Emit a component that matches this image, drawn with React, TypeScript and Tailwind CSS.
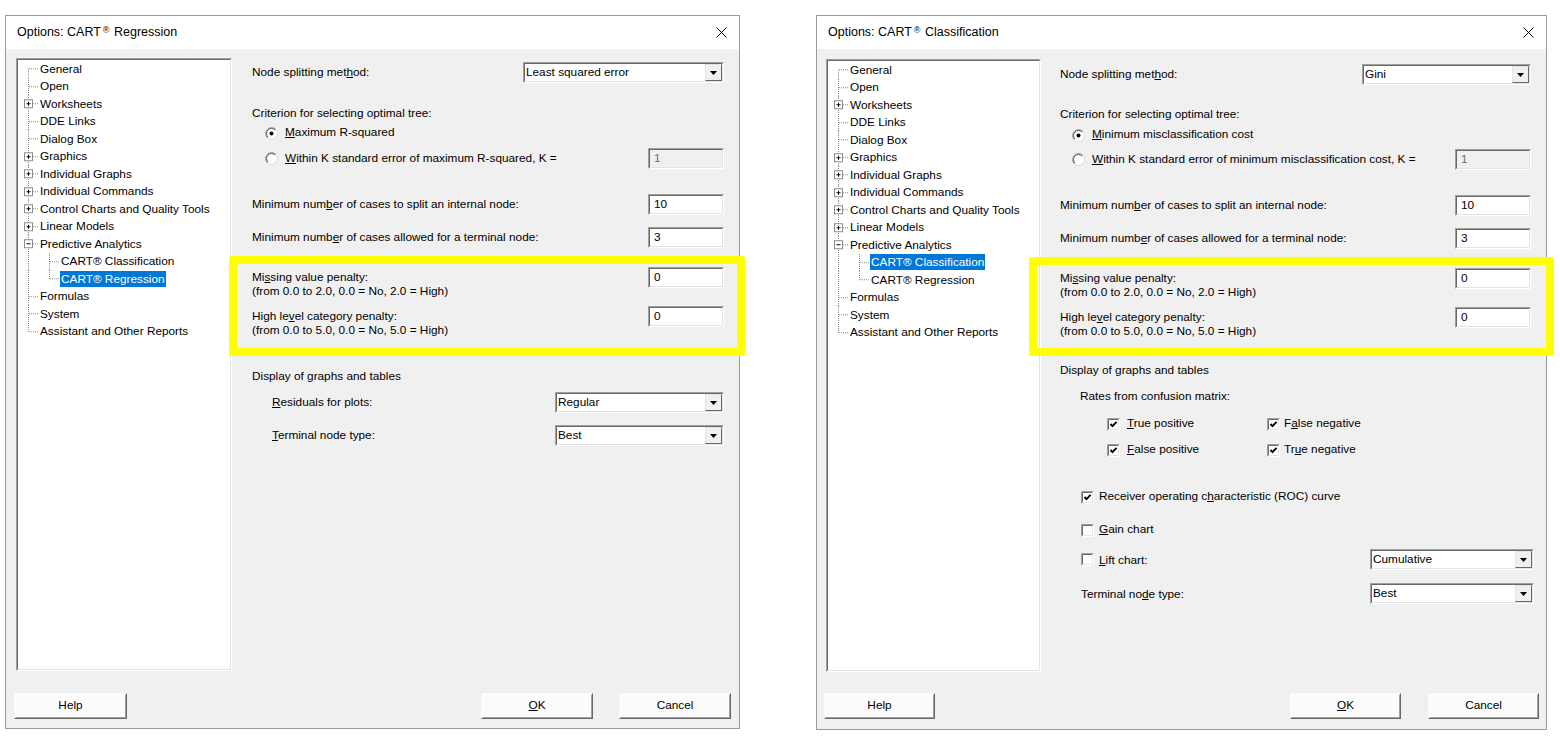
import React from 'react';

const FONT = "font-['Liberation_Sans',Arial,sans-serif]";

function Sunken({ className = '', bg = 'bg-white', children }: { className?: string; bg?: string; children?: React.ReactNode }) {
  return (
    <div className={`flex border border-t-[#a0a0a0] border-l-[#a0a0a0] border-r-white border-b-white ${className}`}>
      <div className={`flex-1 flex min-w-0 border border-t-[#696969] border-l-[#696969] border-r-[#e3e3e3] border-b-[#e3e3e3] ${bg}`}>
        {children}
      </div>
    </div>
  );
}

function TextBox({ value, disabled = false }: { value: string; disabled?: boolean }) {
  return (
    <Sunken className="w-[76px] h-[21px] shrink-0" bg={disabled ? 'bg-[#f0f0f0]' : 'bg-white'}>
      <span className={`self-center pl-[4px] ${disabled ? 'text-[#6d6d6d]' : ''}`}>{value}</span>
    </Sunken>
  );
}

function Dropdown({ w, value }: { w: string; value: string }) {
  return (
    <Sunken className={`${w} h-[21px] shrink-0`}>
      <span className="flex-1 self-center pl-[1px] whitespace-nowrap">{value}</span>
      <div className="w-[17px] flex items-center justify-center bg-[#f0f0f0] border border-t-[#e3e3e3] border-l-[#e3e3e3] border-r-[#696969] border-b-[#696969]">
        <svg width="7" height="4" viewBox="0 0 7 4">
          <path d="M0 0H7L3.5 4Z" fill="#000" />
        </svg>
      </div>
    </Sunken>
  );
}

function Radio({ checked = false }: { checked?: boolean }) {
  return (
    <svg width="13" height="13" viewBox="0 0 13 13" className="shrink-0">
      <circle cx="6.5" cy="6.5" r="6" fill="#fff" stroke="#dcdcdc" />
      <path d="M2.26 10.74 A6 6 0 0 1 10.74 2.26" fill="none" stroke="#9a9a9a" />
      <path d="M2.96 10.04 A5 5 0 0 1 10.04 2.96" fill="none" stroke="#5a5a5a" />
      {checked && <circle cx="6.5" cy="6.5" r="2" fill="#000" />}
    </svg>
  );
}

function Check({ checked = false }: { checked?: boolean }) {
  return (
    <svg width="13" height="13" viewBox="0 0 13 13" className="shrink-0">
      <rect x="0" y="0" width="13" height="13" fill="#fff" />
      <path d="M0.5 12.5V0.5H12.5" stroke="#a0a0a0" fill="none" />
      <path d="M1.5 11.5V1.5H11.5" stroke="#696969" fill="none" />
      <path d="M1.5 11.5H11.5V1.5" stroke="#e3e3e3" fill="none" />
      {checked && <polyline points="3.5,6 5.5,8.2 9.5,3.8" stroke="#000" strokeWidth="1.9" fill="none" />}
    </svg>
  );
}

function Btn({ children, className = '' }: { children: React.ReactNode; className?: string }) {
  return (
    <div className={`h-[26px] flex border border-t-[#f8f8f8] border-l-[#f8f8f8] border-r-[#696969] border-b-[#696969] ${className}`}>
      <div className="flex-1 flex items-center justify-center bg-[#fbfbfb] border border-t-white border-l-white border-r-[#a0a0a0] border-b-[#a0a0a0]">
        {children}
      </div>
    </div>
  );
}

type Kind = 'leaf' | 'plus' | 'minus' | 'child';
type Item = { label: string; kind: Kind };

function Gutter({ kind, first, last, box }: { kind: 'root' | 'child'; first: boolean; last: boolean; box?: 'plus' | 'minus' }) {
  const y1 = first ? 8.75 : 0;
  const y2 = last ? 8.75 : 17.5;
  return (
    <svg width="21" height="17.5" viewBox="0 0 21 17.5" className="shrink-0">
      <line x1="10.5" y1={y1} x2="10.5" y2={y2} stroke="#8c8c8c" strokeDasharray="1 1" />
      <line x1={box ? 15 : 11} y1="8.75" x2="21" y2="8.75" stroke="#8c8c8c" strokeDasharray="1 1" />
      {box && (
        <g>
          <rect x="6.5" y="4.75" width="8" height="8" fill="#fff" stroke="#8c8c8c" />
          <line x1="8.5" y1="8.75" x2="12.5" y2="8.75" stroke="#000" />
          {box === 'plus' && <line x1="10.5" y1="6.75" x2="10.5" y2="10.75" stroke="#000" />}
        </g>
      )}
      {kind === 'child' && null}
    </svg>
  );
}

function ContinueLine() {
  return (
    <svg width="21" height="17.5" viewBox="0 0 21 17.5" className="shrink-0">
      <line x1="10.5" y1="0" x2="10.5" y2="17.5" stroke="#8c8c8c" strokeDasharray="1 1" />
    </svg>
  );
}

const TREE: Item[] = [
  { label: 'General', kind: 'leaf' },
  { label: 'Open', kind: 'leaf' },
  { label: 'Worksheets', kind: 'plus' },
  { label: 'DDE Links', kind: 'leaf' },
  { label: 'Dialog Box', kind: 'leaf' },
  { label: 'Graphics', kind: 'plus' },
  { label: 'Individual Graphs', kind: 'plus' },
  { label: 'Individual Commands', kind: 'plus' },
  { label: 'Control Charts and Quality Tools', kind: 'plus' },
  { label: 'Linear Models', kind: 'plus' },
  { label: 'Predictive Analytics', kind: 'minus' },
  { label: 'CART® Classification', kind: 'child' },
  { label: 'CART® Regression', kind: 'child' },
  { label: 'Formulas', kind: 'leaf' },
  { label: 'System', kind: 'leaf' },
  { label: 'Assistant and Other Reports', kind: 'leaf' },
];

function Tree({ selected, w }: { selected: string; w: string }) {
  return (
    <Sunken className={`${w} h-[613px] shrink-0`}>
      <div className="flex flex-col">
        {TREE.map((it, i) => {
          const sel = it.label === selected;
          const label = (
            <span className={`px-[1px] h-[16px] leading-[16px] whitespace-nowrap ${sel ? 'bg-[#0078d7] text-white' : ''}`}>{it.label}</span>
          );
          if (it.kind === 'child') {
            const isLastChild = it.label === 'CART® Regression';
            return (
              <div key={i} className="h-[17.5px] flex items-center">
                <ContinueLine />
                <Gutter kind="child" first={false} last={isLastChild} />
                {label}
              </div>
            );
          }
          return (
            <div key={i} className="h-[17.5px] flex items-center">
              <Gutter
                kind="root"
                first={i === 0}
                last={i === TREE.length - 1}
                box={it.kind === 'plus' ? 'plus' : it.kind === 'minus' ? 'minus' : undefined}
              />
              {label}
            </div>
          );
        })}
      </div>
    </Sunken>
  );
}

function TitleBar({ title }: { title: string }) {
  return (
    <div className="h-[33px] bg-white flex items-center justify-between pl-[11px] pr-[12px] shrink-0">
      <span className={`text-[12.5px] text-black ${FONT}`}>
        Options: CART<span className="text-[9px] relative top-[-3px] ml-[2px] mr-[1px]">®</span> {title}
      </span>
      <svg width="11" height="11" viewBox="0 0 11 11">
        <path d="M0.5 0.5L10.5 10.5M10.5 0.5L0.5 10.5" stroke="#000" strokeWidth="1" />
      </svg>
    </div>
  );
}

function RegressionDialog() {
  return (
    <div className="ml-[5px] mt-[15px] w-[735px] h-[714px] border border-[#9a9a9a] flex flex-col shrink-0">
      <TitleBar title="Regression" />
      <div className="flex-1 bg-[#f0f0f0] flex flex-col">
        <div className="flex">
          <div className="ml-[10px] mt-[9px]">
            <Tree selected="CART® Regression" w="w-[216px]" />
          </div>
          <div className="flex-1 flex flex-col pl-[20px] pr-[15px] pt-[13px]">
            <div className="h-[21px] flex items-center justify-between">
              <span>Node splitting met<u>h</u>od:</span>
              <Dropdown w="w-[201px]" value="Least squared error" />
            </div>
            <div className="mt-[23px] h-[14px] leading-[14px]">Criterion for selecting optimal tree:</div>
            <div className="mt-[5px] h-[16px] flex items-center pl-[13px]">
              <Radio checked />
              <span className="ml-[7px]"><u>M</u>aximum R-squared</span>
            </div>
            <div className="mt-[7px] h-[21px] flex items-center justify-between pl-[13px]">
              <div className="flex items-center">
                <Radio />
                <span className="ml-[7px]"><u>W</u>ithin K standard error of maximum R-squared, K =</span>
              </div>
              <TextBox value="1" disabled />
            </div>
            <div className="mt-[25px] h-[21px] flex items-center justify-between">
              <span>Minimum num<u>b</u>er of cases to split an internal node:</span>
              <TextBox value="10" />
            </div>
            <div className="mt-[12px] h-[21px] flex items-center justify-between">
              <span>Minimum numb<u>e</u>r of cases allowed for a terminal node:</span>
              <TextBox value="3" />
            </div>
            <div className="mt-[19px] h-[31px] flex items-start justify-between">
              <div className="pt-[4px] leading-[13.5px]">
                Mi<u>s</u>sing value penalty:<br />(from 0.0 to 2.0, 0.0 = No, 2.0 = High)
              </div>
              <TextBox value="0" />
            </div>
            <div className="mt-[8px] h-[31px] flex items-start justify-between">
              <div className="pt-[4px] leading-[13.5px]">
                High le<u>v</u>el category penalty:<br />(from 0.0 to 5.0, 0.0 = No, 5.0 = High)
              </div>
              <TextBox value="0" />
            </div>
            <div className="mt-[32px] h-[14px] leading-[14px]">Display of graphs and tables</div>
            <div className="mt-[9px] h-[21px] flex items-center justify-between pl-[20px]">
              <span><u>R</u>esiduals for plots:</span>
              <Dropdown w="w-[169px]" value="Regular" />
            </div>
            <div className="mt-[12px] h-[21px] flex items-center justify-between pl-[20px]">
              <span><u>T</u>erminal node type:</span>
              <Dropdown w="w-[169px]" value="Best" />
            </div>
          </div>
        </div>
        <div className="mt-auto mb-[9px] flex items-center px-[8px]">
          <Btn className="w-[113px]">Help</Btn>
          <Btn className="w-[112px] ml-auto"><span><u>O</u>K</span></Btn>
          <Btn className="w-[112px] ml-[26px]">Cancel</Btn>
        </div>
      </div>
    </div>
  );
}

function ClassificationDialog() {
  return (
    <div className="ml-[76px] mt-[15px] w-[731px] h-[715px] border border-[#9a9a9a] flex flex-col shrink-0">
      <TitleBar title="Classification" />
      <div className="flex-1 bg-[#f0f0f0] flex flex-col">
        <div className="flex">
          <div className="ml-[9px] mt-[10px]">
            <Tree selected="CART® Classification" w="w-[215px]" />
          </div>
          <div className="flex-1 flex flex-col pl-[19px] pr-[15px] pt-[15px]">
            <div className="h-[21px] flex items-center justify-between">
              <span>Node splitting met<u>h</u>od:</span>
              <Dropdown w="w-[169px]" value="Gini" />
            </div>
            <div className="mt-[22px] h-[14px] leading-[14px]">Criterion for selecting optimal tree:</div>
            <div className="mt-[6px] h-[16px] flex items-center pl-[12px]">
              <Radio checked />
              <span className="ml-[7px]"><u>M</u>inimum misclassification cost</span>
            </div>
            <div className="mt-[6px] h-[21px] flex items-center justify-between pl-[12px]">
              <div className="flex items-center">
                <Radio />
                <span className="ml-[7px]"><u>W</u>ithin K standard error of minimum misclassification cost, K =</span>
              </div>
              <TextBox value="1" disabled />
            </div>
            <div className="mt-[25px] h-[21px] flex items-center justify-between">
              <span>Minimum num<u>b</u>er of cases to split an internal node:</span>
              <TextBox value="10" />
            </div>
            <div className="mt-[12px] h-[21px] flex items-center justify-between">
              <span>Minimum numb<u>e</u>r of cases allowed for a terminal node:</span>
              <TextBox value="3" />
            </div>
            <div className="mt-[19px] h-[31px] flex items-start justify-between">
              <div className="pt-[4px] leading-[13.5px]">
                Mi<u>s</u>sing value penalty:<br />(from 0.0 to 2.0, 0.0 = No, 2.0 = High)
              </div>
              <TextBox value="0" />
            </div>
            <div className="mt-[8px] h-[31px] flex items-start justify-between">
              <div className="pt-[4px] leading-[13.5px]">
                High le<u>v</u>el category penalty:<br />(from 0.0 to 5.0, 0.0 = No, 5.0 = High)
              </div>
              <TextBox value="0" />
            </div>
            <div className="mt-[25px] h-[14px] leading-[14px]">Display of graphs and tables</div>
            <div className="mt-[12px] h-[14px] leading-[14px] pl-[20px]">Rates from confusion matrix:</div>
            <div className="mt-[13px] h-[16px] flex items-center pl-[47px]">
              <div className="w-[160px] flex items-center">
                <Check checked />
                <span className="ml-[7px]"><u>T</u>rue positive</span>
              </div>
              <div className="flex items-center">
                <Check checked />
                <span className="ml-[4px]">F<u>a</u>lse negative</span>
              </div>
            </div>
            <div className="mt-[10px] h-[16px] flex items-center pl-[47px]">
              <div className="w-[160px] flex items-center">
                <Check checked />
                <span className="ml-[7px]"><u>F</u>alse positive</span>
              </div>
              <div className="flex items-center">
                <Check checked />
                <span className="ml-[4px]">Tr<u>u</u>e negative</span>
              </div>
            </div>
            <div className="mt-[31px] h-[16px] flex items-center pl-[21px]">
              <Check checked />
              <span className="ml-[5px]">Receiver operating c<u>h</u>aracteristic (ROC) curve</span>
            </div>
            <div className="mt-[17px] h-[16px] flex items-center pl-[21px]">
              <Check />
              <span className="ml-[5px]"><u>G</u>ain chart</span>
            </div>
            <div className="mt-[11px] h-[21px] flex items-center justify-between pl-[21px]">
              <div className="flex items-center">
                <Check />
                <span className="ml-[5px] pt-[2px]"><u>L</u>ift chart:</span>
              </div>
              <div className="-mr-[3px]">
                <Dropdown w="w-[164px]" value="Cumulative" />
              </div>
            </div>
            <div className="mt-[13px] h-[21px] flex items-center justify-between pl-[21px]">
              <span className="pt-[2px]">Terminal no<u>d</u>e type:</span>
              <div className="-mr-[3px]">
                <Dropdown w="w-[164px]" value="Best" />
              </div>
            </div>
          </div>
        </div>
        <div className="mt-auto mb-[10px] flex items-center px-[7px]">
          <Btn className="w-[111px]">Help</Btn>
          <Btn className="w-[111px] ml-auto"><span><u>O</u>K</span></Btn>
          <Btn className="w-[111px] ml-[27px]">Cancel</Btn>
        </div>
      </div>
    </div>
  );
}

export default function App() {
  return (
    <div className={`relative w-[1560px] h-[738px] bg-white overflow-hidden flex items-start text-[11.8px] text-black ${FONT}`}>
      <RegressionDialog />
      <ClassificationDialog />
      <div className="absolute left-[229px] top-[256px] w-[516px] h-[100px] border-[8px] border-[#ffff00] rounded-[3px] pointer-events-none" />
      <div className="absolute left-[1029px] top-[257px] w-[525px] h-[99px] border-[8px] border-[#ffff00] rounded-[3px] pointer-events-none" />
    </div>
  );
}
